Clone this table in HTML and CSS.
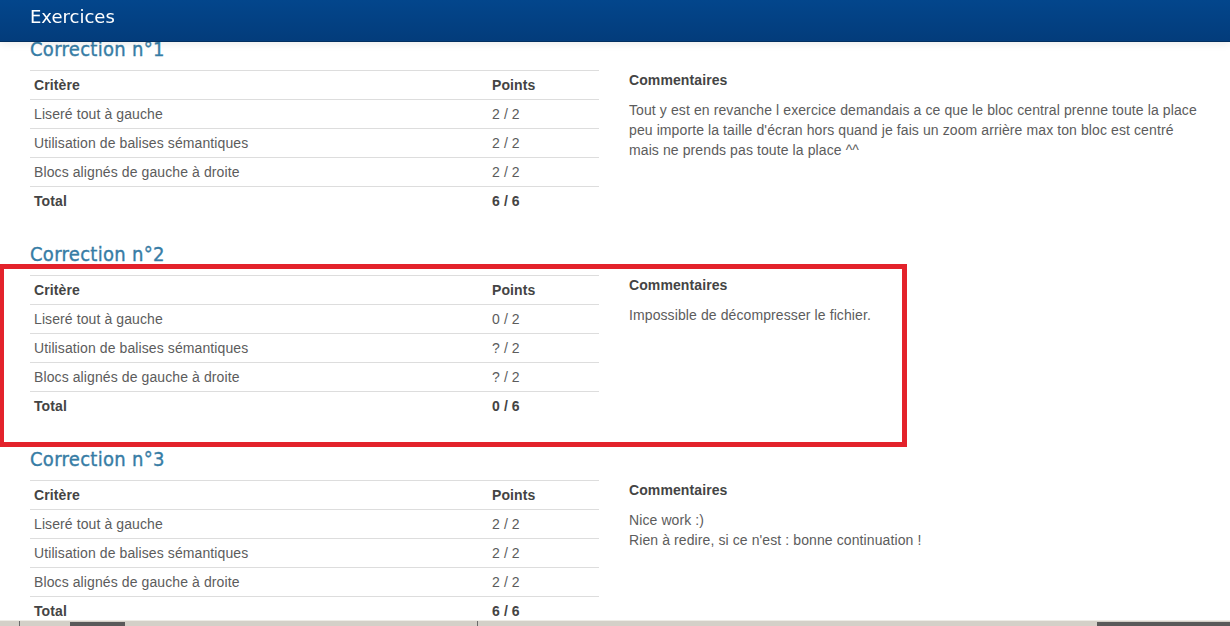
FILE: index.html
```html
<!DOCTYPE html>
<html lang="fr">
<head>
<meta charset="utf-8">
<title>Exercices</title>
<link rel="stylesheet" href="styles.css">
</head>
<body>
<header class="topbar"><h1 class="topbar-title">Exercices</h1></header>

<main class="page">
  <section class="correction">
    <h2 class="correction-title">Correction n°1</h2>
    <div class="correction-body">
      <div class="grid">
        <div class="row head"><span>Critère</span><span>Points</span></div>
        <div class="row"><span>Liseré tout à gauche</span><span>2 / 2</span></div>
        <div class="row"><span>Utilisation de balises sémantiques</span><span>2 / 2</span></div>
        <div class="row"><span>Blocs alignés de gauche à droite</span><span>2 / 2</span></div>
        <div class="row total"><span>Total</span><span>6 / 6</span></div>
      </div>
      <div class="comments">
        <h3 class="comments-title">Commentaires</h3>
        <p class="comments-text">Tout y est en revanche l exercice demandais a ce que le bloc central prenne toute la place peu importe la taille d'écran hors quand je fais un zoom arrière max ton bloc est centré mais ne prends pas toute la place ^^</p>
      </div>
    </div>
  </section>

  <section class="correction">
    <h2 class="correction-title">Correction n°2</h2>
    <div class="correction-body">
      <div class="grid">
        <div class="row head"><span>Critère</span><span>Points</span></div>
        <div class="row"><span>Liseré tout à gauche</span><span>0 / 2</span></div>
        <div class="row"><span>Utilisation de balises sémantiques</span><span>? / 2</span></div>
        <div class="row"><span>Blocs alignés de gauche à droite</span><span>? / 2</span></div>
        <div class="row total"><span>Total</span><span>0 / 6</span></div>
      </div>
      <div class="comments">
        <h3 class="comments-title">Commentaires</h3>
        <p class="comments-text">Impossible de décompresser le fichier.</p>
      </div>
    </div>
  </section>

  <section class="correction">
    <h2 class="correction-title">Correction n°3</h2>
    <div class="correction-body">
      <div class="grid">
        <div class="row head"><span>Critère</span><span>Points</span></div>
        <div class="row"><span>Liseré tout à gauche</span><span>2 / 2</span></div>
        <div class="row"><span>Utilisation de balises sémantiques</span><span>2 / 2</span></div>
        <div class="row"><span>Blocs alignés de gauche à droite</span><span>2 / 2</span></div>
        <div class="row total"><span>Total</span><span>6 / 6</span></div>
      </div>
      <div class="comments">
        <h3 class="comments-title">Commentaires</h3>
        <p class="comments-text">Nice work :)<br>Rien à redire, si ce n'est : bonne continuation !</p>
      </div>
    </div>
  </section>

  <div class="highlight"></div>
</main>

<div class="taskbar">
  <span class="tb-tick tb-tick-a"></span>
  <span class="tb-block tb-block-a"></span>
  <span class="tb-tick tb-tick-b"></span>
  <span class="tb-block tb-block-b"></span>
</div>
</body>
</html>
```

FILE: styles.css
```css
html, body {
  margin: 0;
  padding: 0;
  background: #ffffff;
  height: 100%;
  overflow: hidden;
}

body {
  font-family: "Liberation Sans", Arial, sans-serif;
  font-size: 14px;
  letter-spacing: 0.1px;
  color: #5c5c5c;
}

.topbar {
  position: fixed;
  top: 0;
  left: 0;
  right: 0;
  height: 42px;
  box-sizing: border-box;
  background: linear-gradient(#03468c, #033c7b);
  border-bottom: 1px solid #022f60;
  box-shadow: 0 2px 8px rgba(0, 0, 0, 0.08);
  z-index: 5;
}

.topbar-title {
  margin: 0;
  padding: 6px 0 0 30px;
  font-family: "DejaVu Sans", sans-serif;
  font-weight: normal;
  font-size: 18px;
  line-height: 22px;
  letter-spacing: 0;
  color: #ffffff;
}

.page {
  position: relative;
  padding: 37px 0 0 30px;
}

.correction {
  margin-bottom: 27px;
}

.correction-title {
  margin: 0 0 9px 0;
  font-family: "DejaVu Sans Condensed", "DejaVu Sans", sans-serif;
  font-weight: normal;
  font-size: 20px;
  line-height: 24px;
  letter-spacing: 0.3px;
  color: #367ca5;
  -webkit-text-stroke: 0.35px #367ca5;
}

.correction-body {
  display: flex;
  gap: 30px;
}

.grid {
  width: 569px;
  flex: none;
}

.row {
  display: grid;
  grid-template-columns: 458px 1fr;
  height: 29px;
  box-sizing: border-box;
  border-top: 1px solid #dddddd;
  padding: 0 4px;
  line-height: 28px;
  color: #5c5c5c;
}

.row.head,
.row.total {
  font-weight: bold;
  color: #444444;
}

.comments {
  width: 574px;
}

.comments-title {
  margin: 0 0 10px 0;
  font-size: 14px;
  line-height: 20px;
  font-weight: bold;
  color: #444444;
}

.comments-text {
  margin: 0;
  line-height: 20px;
  color: #5c5c5c;
}

.highlight {
  position: absolute;
  left: -1px;
  top: 264px;
  width: 898px;
  height: 173px;
  border: 5px solid #e3222b;
  pointer-events: none;
}

.taskbar {
  position: fixed;
  left: 0;
  right: 0;
  bottom: 0;
  height: 5px;
  background: #d4d0c8;
  border-top: 1px solid #eeece6;
  z-index: 6;
}

.tb-tick {
  position: absolute;
  top: 0;
  width: 1px;
  height: 5px;
  background: #6b6b6b;
}

.tb-tick-a { left: 19px; }
.tb-tick-b { left: 477px; }

.tb-block {
  position: absolute;
  top: 1px;
  height: 4px;
  background: #5a5a5a;
}

.tb-block-a { left: 70px; width: 55px; }
.tb-block-b { left: 1097px; width: 133px; }
```
